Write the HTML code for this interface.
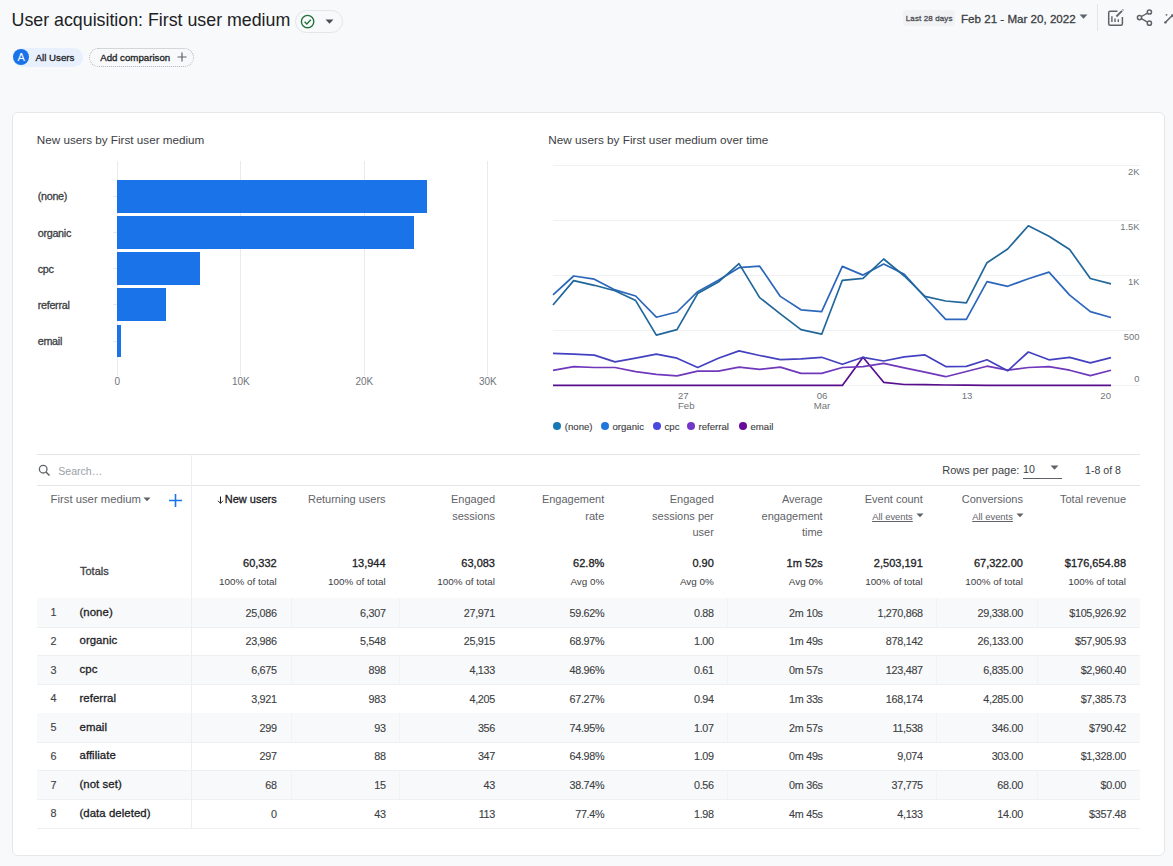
<!DOCTYPE html>
<html><head><meta charset="utf-8"><style>
html,body{margin:0;padding:0;}
body{width:1173px;height:866px;overflow:hidden;background:#f8f9fa;position:relative;font-family:"Liberation Sans", sans-serif;}
.t{position:absolute;white-space:nowrap;}
.r{position:absolute;}
</style></head><body>
<div class="t" style="left:11.60px;top:11.52px;font-size:17.8px;line-height:17.8px;color:#202124;font-weight:400;">User acquisition: First user medium</div><div class="r" style="left:295.00px;top:9.50px;width:47.50px;height:23.00px;border:1px solid #e3e5e8;border-radius:12px;box-sizing:border-box;background:#f8f9fa"></div><svg class="r" style="left:300px;top:14px" width="16" height="16" viewBox="0 0 16 16"><circle cx="7.6" cy="7.6" r="6.2" fill="none" stroke="#23723f" stroke-width="1.4"/><path d="M4.6 7.8 L6.8 10 L10.8 5.8" fill="none" stroke="#23723f" stroke-width="1.4"/></svg><svg class="r" style="left:324.5px;top:18.5px" width="9" height="6" viewBox="0 0 9 6"><path d="M0.5 0.5 L8.5 0.5 L4.5 4.8Z" fill="#4a4e52"/></svg><div class="r" style="left:13.00px;top:48.00px;width:70.00px;height:18.50px;background:#e8f0fe;border-radius:9.5px"></div><div class="r" style="left:13.30px;top:49.20px;width:15.80px;height:15.80px;background:#1a73e8;border-radius:50%"></div><div class="t" style="left:-178.80px;width:400px;text-align:center;top:52.26px;font-size:11px;line-height:11px;color:#fff;font-weight:400;">A</div><div class="t" style="left:35.60px;top:52.94px;font-size:9.7px;line-height:9.7px;color:#202124;font-weight:400;-webkit-text-stroke:0.3px #202124;">All Users</div><div class="r" style="left:89.40px;top:48.10px;width:104.40px;height:19.10px;border:1px dotted #b0b4b9;border-radius:10px;box-sizing:border-box"></div><div class="t" style="left:100.20px;top:52.84px;font-size:9.7px;line-height:9.7px;color:#202124;font-weight:400;-webkit-text-stroke:0.3px #202124;">Add comparison</div><svg class="r" style="left:177px;top:52px" width="10" height="10" viewBox="0 0 10 10"><path d="M5 0.5V9.5M0.5 5H9.5" stroke="#5f6368" stroke-width="1.2"/></svg><div class="r" style="left:903.00px;top:10.00px;width:52.00px;height:16.00px;background:#f1f2f4;border-radius:3px"></div><div class="t" style="left:905.80px;top:14.76px;font-size:8px;line-height:8px;color:#4d5156;font-weight:400;-webkit-text-stroke:0.3px #4d5156;letter-spacing:0.12px;">Last 28 days</div><div class="t" style="left:961.00px;top:12.57px;font-size:11.6px;line-height:11.6px;color:#3c4043;font-weight:400;-webkit-text-stroke:0.3px #3c4043;">Feb 21 - Mar 20, 2022</div><svg class="r" style="left:1079px;top:14px" width="9" height="6" viewBox="0 0 9 6"><path d="M0.5 0.5 L8.5 0.5 L4.5 4.8Z" fill="#5f6368"/></svg><div class="r" style="left:1097.00px;top:4.00px;width:1.00px;height:27.00px;background:#e3e5e8"></div><svg class="r" style="left:0;top:0" width="1173" height="40" viewBox="0 0 1173 40"><path d="M1117.5 11.3H1110.2Q1108.7 11.3 1108.7 12.8V23.7Q1108.7 25.2 1110.2 25.2H1120.9Q1122.4 25.2 1122.4 23.7V17" fill="none" stroke="#5f6368" stroke-width="1.5"/><path d="M1111.9 16.3V21.9M1115 18.5V21.9M1118.3 19.2V21.9" stroke="#5f6368" stroke-width="1.4"/><path d="M1116.4 16.5L1122 10.9" stroke="#5f6368" stroke-width="1.8"/><path d="M1122.6 10.3L1123.4 9.6" stroke="#5f6368" stroke-width="1.4"/><circle cx="1149.4" cy="12" r="2.1" fill="none" stroke="#5f6368" stroke-width="1.5"/><circle cx="1139.5" cy="17.6" r="2.1" fill="none" stroke="#5f6368" stroke-width="1.5"/><circle cx="1149.4" cy="23.2" r="2.1" fill="none" stroke="#5f6368" stroke-width="1.5"/><path d="M1141.4 16.5L1147.5 13.1M1141.4 18.7L1147.5 22.1" stroke="#5f6368" stroke-width="1.4"/><path d="M1165.3 22.5L1171 16.8L1173 15" stroke="#5f6368" stroke-width="1.6" fill="none"/><circle cx="1165.4" cy="22.4" r="1.2" fill="#5f6368"/><circle cx="1166.5" cy="14.8" r="0.9" fill="#5f6368"/><circle cx="1172.3" cy="15.6" r="1.3" fill="#5f6368"/></svg><div class="r" style="left:12.00px;top:112.00px;width:1152.50px;height:743.50px;background:#fff;border:1px solid #e5e7ea;border-radius:6px;box-sizing:border-box"></div><div class="t" style="left:36.80px;top:134.38px;font-size:11.7px;line-height:11.7px;color:#3c4043;font-weight:400;">New users by First user medium</div><div class="r" style="left:116.80px;top:161.00px;width:1.00px;height:214.60px;background:#e8eaed"></div><div class="r" style="left:240.30px;top:161.00px;width:1.00px;height:214.60px;background:#e8eaed"></div><div class="r" style="left:363.80px;top:161.00px;width:1.00px;height:214.60px;background:#e8eaed"></div><div class="r" style="left:487.30px;top:161.00px;width:1.00px;height:214.60px;background:#e8eaed"></div><div class="t" style="left:-82.70px;width:400px;text-align:center;top:376.89px;font-size:10px;line-height:10px;color:#70757a;font-weight:400;">0</div><div class="t" style="left:40.80px;width:400px;text-align:center;top:376.89px;font-size:10px;line-height:10px;color:#70757a;font-weight:400;">10K</div><div class="t" style="left:164.30px;width:400px;text-align:center;top:376.89px;font-size:10px;line-height:10px;color:#70757a;font-weight:400;">20K</div><div class="t" style="left:287.80px;width:400px;text-align:center;top:376.89px;font-size:10px;line-height:10px;color:#70757a;font-weight:400;">30K</div><div class="r" style="left:117.30px;top:180.10px;width:309.81px;height:32.50px;background:#1a73e8"></div><div class="t" style="left:37.70px;top:191.43px;font-size:10.8px;line-height:10.8px;color:#3c4043;font-weight:400;-webkit-text-stroke:0.3px #3c4043;letter-spacing:-0.3px;">(none)</div><div class="r" style="left:112.50px;top:196.10px;width:4.00px;height:1.00px;background:#e8eaed"></div><div class="r" style="left:117.30px;top:216.20px;width:296.23px;height:32.50px;background:#1a73e8"></div><div class="t" style="left:37.70px;top:227.53px;font-size:10.8px;line-height:10.8px;color:#3c4043;font-weight:400;-webkit-text-stroke:0.3px #3c4043;letter-spacing:-0.3px;">organic</div><div class="r" style="left:112.50px;top:232.20px;width:4.00px;height:1.00px;background:#e8eaed"></div><div class="r" style="left:117.30px;top:252.30px;width:82.44px;height:32.50px;background:#1a73e8"></div><div class="t" style="left:37.70px;top:263.63px;font-size:10.8px;line-height:10.8px;color:#3c4043;font-weight:400;-webkit-text-stroke:0.3px #3c4043;letter-spacing:-0.3px;">cpc</div><div class="r" style="left:112.50px;top:268.30px;width:4.00px;height:1.00px;background:#e8eaed"></div><div class="r" style="left:117.30px;top:288.40px;width:48.42px;height:32.50px;background:#1a73e8"></div><div class="t" style="left:37.70px;top:299.73px;font-size:10.8px;line-height:10.8px;color:#3c4043;font-weight:400;-webkit-text-stroke:0.3px #3c4043;letter-spacing:-0.3px;">referral</div><div class="r" style="left:112.50px;top:304.40px;width:4.00px;height:1.00px;background:#e8eaed"></div><div class="r" style="left:117.30px;top:324.50px;width:3.69px;height:32.50px;background:#1a73e8"></div><div class="t" style="left:37.70px;top:335.83px;font-size:10.8px;line-height:10.8px;color:#3c4043;font-weight:400;-webkit-text-stroke:0.3px #3c4043;letter-spacing:-0.3px;">email</div><div class="r" style="left:112.50px;top:340.50px;width:4.00px;height:1.00px;background:#e8eaed"></div><div class="t" style="left:548.30px;top:134.34px;font-size:11.75px;line-height:11.75px;color:#3c4043;font-weight:400;">New users by First user medium over time</div><div class="r" style="left:553.00px;top:385.10px;width:587.00px;height:1.00px;background:#f0f1f3"></div><div class="r" style="left:553.00px;top:329.90px;width:587.00px;height:1.00px;background:#f0f1f3"></div><div class="r" style="left:553.00px;top:274.80px;width:587.00px;height:1.00px;background:#f0f1f3"></div><div class="r" style="left:553.00px;top:219.70px;width:587.00px;height:1.00px;background:#f0f1f3"></div><div class="r" style="left:553.00px;top:164.60px;width:587.00px;height:1.00px;background:#f0f1f3"></div><div class="t" style="left:739.50px;width:400px;text-align:right;top:332.39px;font-size:9.4px;line-height:9.4px;color:#70757a;font-weight:400;">500</div><div class="t" style="left:739.50px;width:400px;text-align:right;top:277.29px;font-size:9.4px;line-height:9.4px;color:#70757a;font-weight:400;">1K</div><div class="t" style="left:739.50px;width:400px;text-align:right;top:222.19px;font-size:9.4px;line-height:9.4px;color:#70757a;font-weight:400;">1.5K</div><div class="t" style="left:739.50px;width:400px;text-align:right;top:167.09px;font-size:9.4px;line-height:9.4px;color:#70757a;font-weight:400;">2K</div><div class="t" style="left:739.50px;width:400px;text-align:right;top:374.19px;font-size:9.4px;line-height:9.4px;color:#70757a;font-weight:400;">0</div><div class="t" style="left:678.00px;top:391.43px;font-size:9.6px;line-height:9.6px;color:#70757a;font-weight:400;">27</div><div class="t" style="left:678.00px;top:400.93px;font-size:9.6px;line-height:9.6px;color:#70757a;font-weight:400;">Feb</div><div class="t" style="left:622.00px;width:400px;text-align:center;top:391.43px;font-size:9.6px;line-height:9.6px;color:#70757a;font-weight:400;">06</div><div class="t" style="left:622.00px;width:400px;text-align:center;top:400.93px;font-size:9.6px;line-height:9.6px;color:#70757a;font-weight:400;">Mar</div><div class="t" style="left:767.00px;width:400px;text-align:center;top:391.43px;font-size:9.6px;line-height:9.6px;color:#70757a;font-weight:400;">13</div><div class="t" style="left:711.00px;width:400px;text-align:right;top:391.43px;font-size:9.6px;line-height:9.6px;color:#70757a;font-weight:400;">20</div><svg class="r" style="left:0;top:0" width="1173" height="866" viewBox="0 0 1173 866"><polyline points="553.00,385.40 573.67,385.40 594.33,385.40 615.00,385.40 635.67,385.40 656.33,385.40 677.00,385.40 697.67,385.40 718.33,385.40 739.00,385.40 759.67,385.40 780.33,385.40 801.00,385.40 821.67,385.40 842.33,385.40 863.00,357.30 883.67,382.30 904.33,384.50 925.00,384.70 945.67,385.00 966.33,385.20 987.00,385.40 1007.67,385.40 1028.33,385.40 1049.00,385.40 1069.67,385.40 1090.33,385.40 1111.00,385.40" fill="none" stroke="#580d8c" stroke-width="1.7" stroke-linejoin="round"/><polyline points="553.00,370.30 573.67,366.70 594.33,367.50 615.00,367.50 635.67,371.70 656.33,374.30 677.00,375.80 697.67,371.20 718.33,371.20 739.00,367.10 759.67,369.30 780.33,367.10 801.00,373.40 821.67,373.40 842.33,367.50 863.00,366.60 883.67,363.40 904.33,367.90 925.00,372.10 945.67,376.70 966.33,371.50 987.00,366.20 1007.67,370.20 1028.33,367.50 1049.00,366.60 1069.67,370.20 1090.33,375.60 1111.00,370.20" fill="none" stroke="#7038bb" stroke-width="1.7" stroke-linejoin="round"/><polyline points="553.00,353.30 573.67,354.20 594.33,355.10 615.00,361.90 635.67,358.20 656.33,354.20 677.00,358.20 697.67,367.50 718.33,358.20 739.00,350.90 759.67,355.50 780.33,359.70 801.00,358.80 821.67,357.30 842.33,364.30 863.00,357.30 883.67,361.00 904.33,356.80 925.00,354.90 945.67,366.60 966.33,366.40 987.00,359.80 1007.67,370.80 1028.33,352.00 1049.00,359.80 1069.67,357.40 1090.33,362.90 1111.00,357.60" fill="none" stroke="#4441c0" stroke-width="1.7" stroke-linejoin="round"/><polyline points="553.00,294.90 573.67,276.00 594.33,279.20 615.00,289.90 635.67,296.00 656.33,317.20 677.00,312.00 697.67,291.70 718.33,280.30 739.00,267.70 759.67,266.20 780.33,296.40 801.00,309.80 821.67,311.70 842.33,266.40 863.00,275.10 883.67,264.00 904.33,274.20 925.00,297.30 945.67,319.40 966.33,319.40 987.00,281.70 1007.67,286.30 1028.33,278.70 1049.00,272.10 1069.67,295.10 1090.33,311.60 1111.00,317.50" fill="none" stroke="#2c67bb" stroke-width="1.7" stroke-linejoin="round"/><polyline points="553.00,305.00 573.67,280.60 594.33,285.30 615.00,290.80 635.67,300.60 656.33,335.10 677.00,329.60 697.67,293.60 718.33,282.10 739.00,263.60 759.67,297.60 780.33,313.90 801.00,329.60 821.67,334.20 842.33,280.30 863.00,278.40 883.67,259.00 904.33,276.00 925.00,296.40 945.67,301.00 966.33,302.80 987.00,262.70 1007.67,249.00 1028.33,225.80 1049.00,236.30 1069.67,249.50 1090.33,278.50 1111.00,283.90" fill="none" stroke="#21679a" stroke-width="1.7" stroke-linejoin="round"/></svg><div class="r" style="left:553.30px;top:422.30px;width:8.00px;height:8.00px;background:#1778b4;border-radius:50%"></div><div class="t" style="left:564.80px;top:422.03px;font-size:9.6px;line-height:9.6px;color:#3c4043;font-weight:400;-webkit-text-stroke:0.12px #3c4043;">(none)</div><div class="r" style="left:601.00px;top:422.30px;width:8.00px;height:8.00px;background:#2176dd;border-radius:50%"></div><div class="t" style="left:612.50px;top:422.03px;font-size:9.6px;line-height:9.6px;color:#3c4043;font-weight:400;-webkit-text-stroke:0.12px #3c4043;">organic</div><div class="r" style="left:653.00px;top:422.30px;width:8.00px;height:8.00px;background:#4848e0;border-radius:50%"></div><div class="t" style="left:664.50px;top:422.03px;font-size:9.6px;line-height:9.6px;color:#3c4043;font-weight:400;-webkit-text-stroke:0.12px #3c4043;">cpc</div><div class="r" style="left:687.00px;top:422.30px;width:8.00px;height:8.00px;background:#7236c8;border-radius:50%"></div><div class="t" style="left:698.50px;top:422.03px;font-size:9.6px;line-height:9.6px;color:#3c4043;font-weight:400;-webkit-text-stroke:0.12px #3c4043;">referral</div><div class="r" style="left:739.00px;top:422.30px;width:8.00px;height:8.00px;background:#6a0a9a;border-radius:50%"></div><div class="t" style="left:750.50px;top:422.03px;font-size:9.6px;line-height:9.6px;color:#3c4043;font-weight:400;-webkit-text-stroke:0.12px #3c4043;">email</div><div class="r" style="left:37.00px;top:453.50px;width:1103.00px;height:1.00px;background:#e3e5e8"></div><div class="r" style="left:37.00px;top:485.00px;width:1103.00px;height:1.00px;background:#e3e5e8"></div><svg class="r" style="left:38px;top:464px" width="13" height="13" viewBox="0 0 13 13"><circle cx="5.2" cy="5.2" r="3.8" fill="none" stroke="#5f6368" stroke-width="1.3"/><path d="M8 8L11.5 11.5" stroke="#5f6368" stroke-width="1.5"/></svg><div class="t" style="left:58.20px;top:465.90px;font-size:10.6px;line-height:10.6px;color:#9aa0a6;font-weight:400;">Search…</div><div class="t" style="left:942.30px;top:464.96px;font-size:11.0px;line-height:11.0px;color:#3c4043;font-weight:400;">Rows per page:</div><div class="t" style="left:1023.00px;top:463.60px;font-size:10.6px;line-height:10.6px;color:#3c4043;font-weight:400;">10</div><div class="r" style="left:1022.50px;top:478.00px;width:39.50px;height:1.00px;background:#5f6368"></div><svg class="r" style="left:1050px;top:464.5px" width="9" height="6" viewBox="0 0 9 6"><path d="M0.5 0.5 L8.5 0.5 L4.5 4.8Z" fill="#5f6368"/></svg><div class="t" style="left:1085.00px;top:465.30px;font-size:10.6px;line-height:10.6px;color:#3c4043;font-weight:400;">1-8 of 8</div><div class="t" style="left:50.60px;top:494.02px;font-size:11.3px;line-height:11.3px;color:#5f6368;font-weight:400;">First user medium</div><svg class="r" style="left:143px;top:497px" width="8" height="5" viewBox="0 0 8 5"><path d="M0.5 0.5 L7.5 0.5 L4 4.3Z" fill="#5f6368"/></svg><svg class="r" style="left:168px;top:493px" width="15" height="15" viewBox="0 0 15 15"><path d="M7.5 1V14M1 7.5H14" stroke="#1a73e8" stroke-width="1.6"/></svg><div class="t" style="left:-123.30px;width:400px;text-align:right;top:494.46px;font-size:11px;line-height:11px;color:#202124;font-weight:400;-webkit-text-stroke:0.3px #202124;">New users</div><svg class="r" style="left:216.8px;top:495.5px" width="7" height="8" viewBox="0 0 7 8"><path d="M3.5 0.5V7.3M1 4.8L3.5 7.3L6 4.8" fill="none" stroke="#202124" stroke-width="1"/></svg><div class="t" style="left:-14.40px;width:400px;text-align:right;top:494.26px;font-size:11px;line-height:11px;color:#5f6368;font-weight:400;">Returning users</div><div class="t" style="left:95.00px;width:400px;text-align:right;top:494.26px;font-size:11px;line-height:11px;color:#5f6368;font-weight:400;">Engaged</div><div class="t" style="left:95.00px;width:400px;text-align:right;top:510.66px;font-size:11px;line-height:11px;color:#5f6368;font-weight:400;">sessions</div><div class="t" style="left:204.30px;width:400px;text-align:right;top:494.26px;font-size:11px;line-height:11px;color:#5f6368;font-weight:400;">Engagement</div><div class="t" style="left:204.30px;width:400px;text-align:right;top:510.66px;font-size:11px;line-height:11px;color:#5f6368;font-weight:400;">rate</div><div class="t" style="left:313.80px;width:400px;text-align:right;top:494.26px;font-size:11px;line-height:11px;color:#5f6368;font-weight:400;">Engaged</div><div class="t" style="left:313.80px;width:400px;text-align:right;top:510.66px;font-size:11px;line-height:11px;color:#5f6368;font-weight:400;">sessions per</div><div class="t" style="left:313.80px;width:400px;text-align:right;top:527.06px;font-size:11px;line-height:11px;color:#5f6368;font-weight:400;">user</div><div class="t" style="left:422.70px;width:400px;text-align:right;top:494.26px;font-size:11px;line-height:11px;color:#5f6368;font-weight:400;">Average</div><div class="t" style="left:422.70px;width:400px;text-align:right;top:510.66px;font-size:11px;line-height:11px;color:#5f6368;font-weight:400;">engagement</div><div class="t" style="left:422.70px;width:400px;text-align:right;top:527.06px;font-size:11px;line-height:11px;color:#5f6368;font-weight:400;">time</div><div class="t" style="left:522.80px;width:400px;text-align:right;top:494.26px;font-size:11px;line-height:11px;color:#5f6368;font-weight:400;">Event count</div><div class="t" style="left:622.90px;width:400px;text-align:right;top:494.26px;font-size:11px;line-height:11px;color:#5f6368;font-weight:400;">Conversions</div><div class="t" style="left:726.00px;width:400px;text-align:right;top:494.26px;font-size:11px;line-height:11px;color:#5f6368;font-weight:400;">Total revenue</div><div class="t" style="left:512.80px;width:400px;text-align:right;top:511.99px;font-size:9.4px;line-height:9.4px;color:#5f6368;font-weight:400;text-decoration:underline;">All events</div><svg class="r" style="left:916.3px;top:513px" width="8" height="5" viewBox="0 0 8 5"><path d="M0.5 0.5 L7.5 0.5 L4 4.3Z" fill="#5f6368"/></svg><div class="t" style="left:612.90px;width:400px;text-align:right;top:511.99px;font-size:9.4px;line-height:9.4px;color:#5f6368;font-weight:400;text-decoration:underline;">All events</div><svg class="r" style="left:1016.4px;top:513px" width="8" height="5" viewBox="0 0 8 5"><path d="M0.5 0.5 L7.5 0.5 L4 4.3Z" fill="#5f6368"/></svg><div class="t" style="left:80.00px;top:566.46px;font-size:11px;line-height:11px;color:#3c4043;font-weight:400;-webkit-text-stroke:0.3px #3c4043;">Totals</div><div class="t" style="left:-123.30px;width:400px;text-align:right;top:558.06px;font-size:11px;line-height:11px;color:#202124;font-weight:400;-webkit-text-stroke:0.3px #202124;">60,332</div><div class="t" style="left:-123.30px;width:400px;text-align:right;top:576.58px;font-size:9.9px;line-height:9.9px;color:#3c4043;font-weight:400;">100% of total</div><div class="t" style="left:-14.40px;width:400px;text-align:right;top:558.06px;font-size:11px;line-height:11px;color:#202124;font-weight:400;-webkit-text-stroke:0.3px #202124;">13,944</div><div class="t" style="left:-14.40px;width:400px;text-align:right;top:576.58px;font-size:9.9px;line-height:9.9px;color:#3c4043;font-weight:400;">100% of total</div><div class="t" style="left:95.00px;width:400px;text-align:right;top:558.06px;font-size:11px;line-height:11px;color:#202124;font-weight:400;-webkit-text-stroke:0.3px #202124;">63,083</div><div class="t" style="left:95.00px;width:400px;text-align:right;top:576.58px;font-size:9.9px;line-height:9.9px;color:#3c4043;font-weight:400;">100% of total</div><div class="t" style="left:204.30px;width:400px;text-align:right;top:558.06px;font-size:11px;line-height:11px;color:#202124;font-weight:400;-webkit-text-stroke:0.3px #202124;">62.8%</div><div class="t" style="left:204.30px;width:400px;text-align:right;top:576.58px;font-size:9.9px;line-height:9.9px;color:#3c4043;font-weight:400;">Avg 0%</div><div class="t" style="left:313.80px;width:400px;text-align:right;top:558.06px;font-size:11px;line-height:11px;color:#202124;font-weight:400;-webkit-text-stroke:0.3px #202124;">0.90</div><div class="t" style="left:313.80px;width:400px;text-align:right;top:576.58px;font-size:9.9px;line-height:9.9px;color:#3c4043;font-weight:400;">Avg 0%</div><div class="t" style="left:422.70px;width:400px;text-align:right;top:558.06px;font-size:11px;line-height:11px;color:#202124;font-weight:400;-webkit-text-stroke:0.3px #202124;">1m 52s</div><div class="t" style="left:422.70px;width:400px;text-align:right;top:576.58px;font-size:9.9px;line-height:9.9px;color:#3c4043;font-weight:400;">Avg 0%</div><div class="t" style="left:522.80px;width:400px;text-align:right;top:558.06px;font-size:11px;line-height:11px;color:#202124;font-weight:400;-webkit-text-stroke:0.3px #202124;">2,503,191</div><div class="t" style="left:522.80px;width:400px;text-align:right;top:576.58px;font-size:9.9px;line-height:9.9px;color:#3c4043;font-weight:400;">100% of total</div><div class="t" style="left:622.90px;width:400px;text-align:right;top:558.06px;font-size:11px;line-height:11px;color:#202124;font-weight:400;-webkit-text-stroke:0.3px #202124;">67,322.00</div><div class="t" style="left:622.90px;width:400px;text-align:right;top:576.58px;font-size:9.9px;line-height:9.9px;color:#3c4043;font-weight:400;">100% of total</div><div class="t" style="left:726.00px;width:400px;text-align:right;top:558.06px;font-size:11px;line-height:11px;color:#202124;font-weight:400;-webkit-text-stroke:0.3px #202124;">$176,654.88</div><div class="t" style="left:726.00px;width:400px;text-align:right;top:576.58px;font-size:9.9px;line-height:9.9px;color:#3c4043;font-weight:400;">100% of total</div><div class="r" style="left:37.00px;top:597.80px;width:1103.00px;height:1.00px;background:#e8eaed"></div><div class="r" style="left:37.00px;top:598.30px;width:1103.00px;height:28.75px;background:#f8f9fa"></div><div class="r" style="left:290.50px;top:598.30px;width:1.00px;height:28.75px;background:#f1f3f4"></div><div class="r" style="left:399.00px;top:598.30px;width:1.00px;height:28.75px;background:#f1f3f4"></div><div class="r" style="left:727.00px;top:598.30px;width:1.00px;height:28.75px;background:#f1f3f4"></div><div class="r" style="left:936.40px;top:598.30px;width:1.00px;height:28.75px;background:#f1f3f4"></div><div class="r" style="left:1036.50px;top:598.30px;width:1.00px;height:28.75px;background:#f1f3f4"></div><div class="r" style="left:37.00px;top:626.55px;width:1103.00px;height:1.00px;background:#eef0f2"></div><div class="t" style="left:50.50px;top:607.13px;font-size:10.8px;line-height:10.8px;color:#3c4043;font-weight:400;-webkit-text-stroke:0.12px #3c4043;">1</div><div class="t" style="left:79.50px;top:606.53px;font-size:11.4px;line-height:11.4px;color:#202124;font-weight:400;-webkit-text-stroke:0.3px #202124;letter-spacing:0.05px;">(none)</div><div class="t" style="left:-123.30px;width:400px;text-align:right;top:607.73px;font-size:10.8px;line-height:10.8px;color:#3c4043;font-weight:400;-webkit-text-stroke:0.12px #3c4043;letter-spacing:-0.3px;">25,086</div><div class="t" style="left:-14.40px;width:400px;text-align:right;top:607.73px;font-size:10.8px;line-height:10.8px;color:#3c4043;font-weight:400;-webkit-text-stroke:0.12px #3c4043;letter-spacing:-0.3px;">6,307</div><div class="t" style="left:95.00px;width:400px;text-align:right;top:607.73px;font-size:10.8px;line-height:10.8px;color:#3c4043;font-weight:400;-webkit-text-stroke:0.12px #3c4043;letter-spacing:-0.3px;">27,971</div><div class="t" style="left:204.30px;width:400px;text-align:right;top:607.73px;font-size:10.8px;line-height:10.8px;color:#3c4043;font-weight:400;-webkit-text-stroke:0.12px #3c4043;letter-spacing:-0.3px;">59.62%</div><div class="t" style="left:313.80px;width:400px;text-align:right;top:607.73px;font-size:10.8px;line-height:10.8px;color:#3c4043;font-weight:400;-webkit-text-stroke:0.12px #3c4043;letter-spacing:-0.3px;">0.88</div><div class="t" style="left:422.70px;width:400px;text-align:right;top:607.73px;font-size:10.8px;line-height:10.8px;color:#3c4043;font-weight:400;-webkit-text-stroke:0.12px #3c4043;letter-spacing:-0.3px;">2m 10s</div><div class="t" style="left:522.80px;width:400px;text-align:right;top:607.73px;font-size:10.8px;line-height:10.8px;color:#3c4043;font-weight:400;-webkit-text-stroke:0.12px #3c4043;letter-spacing:-0.3px;">1,270,868</div><div class="t" style="left:622.90px;width:400px;text-align:right;top:607.73px;font-size:10.8px;line-height:10.8px;color:#3c4043;font-weight:400;-webkit-text-stroke:0.12px #3c4043;letter-spacing:-0.3px;">29,338.00</div><div class="t" style="left:726.00px;width:400px;text-align:right;top:607.73px;font-size:10.8px;line-height:10.8px;color:#3c4043;font-weight:400;-webkit-text-stroke:0.12px #3c4043;letter-spacing:-0.3px;">$105,926.92</div><div class="r" style="left:37.00px;top:655.30px;width:1103.00px;height:1.00px;background:#eef0f2"></div><div class="t" style="left:50.50px;top:635.88px;font-size:10.8px;line-height:10.8px;color:#3c4043;font-weight:400;-webkit-text-stroke:0.12px #3c4043;">2</div><div class="t" style="left:79.50px;top:635.28px;font-size:11.4px;line-height:11.4px;color:#202124;font-weight:400;-webkit-text-stroke:0.3px #202124;letter-spacing:0.05px;">organic</div><div class="t" style="left:-123.30px;width:400px;text-align:right;top:636.48px;font-size:10.8px;line-height:10.8px;color:#3c4043;font-weight:400;-webkit-text-stroke:0.12px #3c4043;letter-spacing:-0.3px;">23,986</div><div class="t" style="left:-14.40px;width:400px;text-align:right;top:636.48px;font-size:10.8px;line-height:10.8px;color:#3c4043;font-weight:400;-webkit-text-stroke:0.12px #3c4043;letter-spacing:-0.3px;">5,548</div><div class="t" style="left:95.00px;width:400px;text-align:right;top:636.48px;font-size:10.8px;line-height:10.8px;color:#3c4043;font-weight:400;-webkit-text-stroke:0.12px #3c4043;letter-spacing:-0.3px;">25,915</div><div class="t" style="left:204.30px;width:400px;text-align:right;top:636.48px;font-size:10.8px;line-height:10.8px;color:#3c4043;font-weight:400;-webkit-text-stroke:0.12px #3c4043;letter-spacing:-0.3px;">68.97%</div><div class="t" style="left:313.80px;width:400px;text-align:right;top:636.48px;font-size:10.8px;line-height:10.8px;color:#3c4043;font-weight:400;-webkit-text-stroke:0.12px #3c4043;letter-spacing:-0.3px;">1.00</div><div class="t" style="left:422.70px;width:400px;text-align:right;top:636.48px;font-size:10.8px;line-height:10.8px;color:#3c4043;font-weight:400;-webkit-text-stroke:0.12px #3c4043;letter-spacing:-0.3px;">1m 49s</div><div class="t" style="left:522.80px;width:400px;text-align:right;top:636.48px;font-size:10.8px;line-height:10.8px;color:#3c4043;font-weight:400;-webkit-text-stroke:0.12px #3c4043;letter-spacing:-0.3px;">878,142</div><div class="t" style="left:622.90px;width:400px;text-align:right;top:636.48px;font-size:10.8px;line-height:10.8px;color:#3c4043;font-weight:400;-webkit-text-stroke:0.12px #3c4043;letter-spacing:-0.3px;">26,133.00</div><div class="t" style="left:726.00px;width:400px;text-align:right;top:636.48px;font-size:10.8px;line-height:10.8px;color:#3c4043;font-weight:400;-webkit-text-stroke:0.12px #3c4043;letter-spacing:-0.3px;">$57,905.93</div><div class="r" style="left:37.00px;top:655.80px;width:1103.00px;height:28.75px;background:#f8f9fa"></div><div class="r" style="left:290.50px;top:655.80px;width:1.00px;height:28.75px;background:#f1f3f4"></div><div class="r" style="left:399.00px;top:655.80px;width:1.00px;height:28.75px;background:#f1f3f4"></div><div class="r" style="left:727.00px;top:655.80px;width:1.00px;height:28.75px;background:#f1f3f4"></div><div class="r" style="left:936.40px;top:655.80px;width:1.00px;height:28.75px;background:#f1f3f4"></div><div class="r" style="left:1036.50px;top:655.80px;width:1.00px;height:28.75px;background:#f1f3f4"></div><div class="r" style="left:37.00px;top:684.05px;width:1103.00px;height:1.00px;background:#eef0f2"></div><div class="t" style="left:50.50px;top:664.63px;font-size:10.8px;line-height:10.8px;color:#3c4043;font-weight:400;-webkit-text-stroke:0.12px #3c4043;">3</div><div class="t" style="left:79.50px;top:664.03px;font-size:11.4px;line-height:11.4px;color:#202124;font-weight:400;-webkit-text-stroke:0.3px #202124;letter-spacing:0.05px;">cpc</div><div class="t" style="left:-123.30px;width:400px;text-align:right;top:665.23px;font-size:10.8px;line-height:10.8px;color:#3c4043;font-weight:400;-webkit-text-stroke:0.12px #3c4043;letter-spacing:-0.3px;">6,675</div><div class="t" style="left:-14.40px;width:400px;text-align:right;top:665.23px;font-size:10.8px;line-height:10.8px;color:#3c4043;font-weight:400;-webkit-text-stroke:0.12px #3c4043;letter-spacing:-0.3px;">898</div><div class="t" style="left:95.00px;width:400px;text-align:right;top:665.23px;font-size:10.8px;line-height:10.8px;color:#3c4043;font-weight:400;-webkit-text-stroke:0.12px #3c4043;letter-spacing:-0.3px;">4,133</div><div class="t" style="left:204.30px;width:400px;text-align:right;top:665.23px;font-size:10.8px;line-height:10.8px;color:#3c4043;font-weight:400;-webkit-text-stroke:0.12px #3c4043;letter-spacing:-0.3px;">48.96%</div><div class="t" style="left:313.80px;width:400px;text-align:right;top:665.23px;font-size:10.8px;line-height:10.8px;color:#3c4043;font-weight:400;-webkit-text-stroke:0.12px #3c4043;letter-spacing:-0.3px;">0.61</div><div class="t" style="left:422.70px;width:400px;text-align:right;top:665.23px;font-size:10.8px;line-height:10.8px;color:#3c4043;font-weight:400;-webkit-text-stroke:0.12px #3c4043;letter-spacing:-0.3px;">0m 57s</div><div class="t" style="left:522.80px;width:400px;text-align:right;top:665.23px;font-size:10.8px;line-height:10.8px;color:#3c4043;font-weight:400;-webkit-text-stroke:0.12px #3c4043;letter-spacing:-0.3px;">123,487</div><div class="t" style="left:622.90px;width:400px;text-align:right;top:665.23px;font-size:10.8px;line-height:10.8px;color:#3c4043;font-weight:400;-webkit-text-stroke:0.12px #3c4043;letter-spacing:-0.3px;">6,835.00</div><div class="t" style="left:726.00px;width:400px;text-align:right;top:665.23px;font-size:10.8px;line-height:10.8px;color:#3c4043;font-weight:400;-webkit-text-stroke:0.12px #3c4043;letter-spacing:-0.3px;">$2,960.40</div><div class="r" style="left:37.00px;top:712.80px;width:1103.00px;height:1.00px;background:#eef0f2"></div><div class="t" style="left:50.50px;top:693.38px;font-size:10.8px;line-height:10.8px;color:#3c4043;font-weight:400;-webkit-text-stroke:0.12px #3c4043;">4</div><div class="t" style="left:79.50px;top:692.78px;font-size:11.4px;line-height:11.4px;color:#202124;font-weight:400;-webkit-text-stroke:0.3px #202124;letter-spacing:0.05px;">referral</div><div class="t" style="left:-123.30px;width:400px;text-align:right;top:693.98px;font-size:10.8px;line-height:10.8px;color:#3c4043;font-weight:400;-webkit-text-stroke:0.12px #3c4043;letter-spacing:-0.3px;">3,921</div><div class="t" style="left:-14.40px;width:400px;text-align:right;top:693.98px;font-size:10.8px;line-height:10.8px;color:#3c4043;font-weight:400;-webkit-text-stroke:0.12px #3c4043;letter-spacing:-0.3px;">983</div><div class="t" style="left:95.00px;width:400px;text-align:right;top:693.98px;font-size:10.8px;line-height:10.8px;color:#3c4043;font-weight:400;-webkit-text-stroke:0.12px #3c4043;letter-spacing:-0.3px;">4,205</div><div class="t" style="left:204.30px;width:400px;text-align:right;top:693.98px;font-size:10.8px;line-height:10.8px;color:#3c4043;font-weight:400;-webkit-text-stroke:0.12px #3c4043;letter-spacing:-0.3px;">67.27%</div><div class="t" style="left:313.80px;width:400px;text-align:right;top:693.98px;font-size:10.8px;line-height:10.8px;color:#3c4043;font-weight:400;-webkit-text-stroke:0.12px #3c4043;letter-spacing:-0.3px;">0.94</div><div class="t" style="left:422.70px;width:400px;text-align:right;top:693.98px;font-size:10.8px;line-height:10.8px;color:#3c4043;font-weight:400;-webkit-text-stroke:0.12px #3c4043;letter-spacing:-0.3px;">1m 33s</div><div class="t" style="left:522.80px;width:400px;text-align:right;top:693.98px;font-size:10.8px;line-height:10.8px;color:#3c4043;font-weight:400;-webkit-text-stroke:0.12px #3c4043;letter-spacing:-0.3px;">168,174</div><div class="t" style="left:622.90px;width:400px;text-align:right;top:693.98px;font-size:10.8px;line-height:10.8px;color:#3c4043;font-weight:400;-webkit-text-stroke:0.12px #3c4043;letter-spacing:-0.3px;">4,285.00</div><div class="t" style="left:726.00px;width:400px;text-align:right;top:693.98px;font-size:10.8px;line-height:10.8px;color:#3c4043;font-weight:400;-webkit-text-stroke:0.12px #3c4043;letter-spacing:-0.3px;">$7,385.73</div><div class="r" style="left:37.00px;top:713.30px;width:1103.00px;height:28.75px;background:#f8f9fa"></div><div class="r" style="left:290.50px;top:713.30px;width:1.00px;height:28.75px;background:#f1f3f4"></div><div class="r" style="left:399.00px;top:713.30px;width:1.00px;height:28.75px;background:#f1f3f4"></div><div class="r" style="left:727.00px;top:713.30px;width:1.00px;height:28.75px;background:#f1f3f4"></div><div class="r" style="left:936.40px;top:713.30px;width:1.00px;height:28.75px;background:#f1f3f4"></div><div class="r" style="left:1036.50px;top:713.30px;width:1.00px;height:28.75px;background:#f1f3f4"></div><div class="r" style="left:37.00px;top:741.55px;width:1103.00px;height:1.00px;background:#eef0f2"></div><div class="t" style="left:50.50px;top:722.13px;font-size:10.8px;line-height:10.8px;color:#3c4043;font-weight:400;-webkit-text-stroke:0.12px #3c4043;">5</div><div class="t" style="left:79.50px;top:721.53px;font-size:11.4px;line-height:11.4px;color:#202124;font-weight:400;-webkit-text-stroke:0.3px #202124;letter-spacing:0.05px;">email</div><div class="t" style="left:-123.30px;width:400px;text-align:right;top:722.73px;font-size:10.8px;line-height:10.8px;color:#3c4043;font-weight:400;-webkit-text-stroke:0.12px #3c4043;letter-spacing:-0.3px;">299</div><div class="t" style="left:-14.40px;width:400px;text-align:right;top:722.73px;font-size:10.8px;line-height:10.8px;color:#3c4043;font-weight:400;-webkit-text-stroke:0.12px #3c4043;letter-spacing:-0.3px;">93</div><div class="t" style="left:95.00px;width:400px;text-align:right;top:722.73px;font-size:10.8px;line-height:10.8px;color:#3c4043;font-weight:400;-webkit-text-stroke:0.12px #3c4043;letter-spacing:-0.3px;">356</div><div class="t" style="left:204.30px;width:400px;text-align:right;top:722.73px;font-size:10.8px;line-height:10.8px;color:#3c4043;font-weight:400;-webkit-text-stroke:0.12px #3c4043;letter-spacing:-0.3px;">74.95%</div><div class="t" style="left:313.80px;width:400px;text-align:right;top:722.73px;font-size:10.8px;line-height:10.8px;color:#3c4043;font-weight:400;-webkit-text-stroke:0.12px #3c4043;letter-spacing:-0.3px;">1.07</div><div class="t" style="left:422.70px;width:400px;text-align:right;top:722.73px;font-size:10.8px;line-height:10.8px;color:#3c4043;font-weight:400;-webkit-text-stroke:0.12px #3c4043;letter-spacing:-0.3px;">2m 57s</div><div class="t" style="left:522.80px;width:400px;text-align:right;top:722.73px;font-size:10.8px;line-height:10.8px;color:#3c4043;font-weight:400;-webkit-text-stroke:0.12px #3c4043;letter-spacing:-0.3px;">11,538</div><div class="t" style="left:622.90px;width:400px;text-align:right;top:722.73px;font-size:10.8px;line-height:10.8px;color:#3c4043;font-weight:400;-webkit-text-stroke:0.12px #3c4043;letter-spacing:-0.3px;">346.00</div><div class="t" style="left:726.00px;width:400px;text-align:right;top:722.73px;font-size:10.8px;line-height:10.8px;color:#3c4043;font-weight:400;-webkit-text-stroke:0.12px #3c4043;letter-spacing:-0.3px;">$790.42</div><div class="r" style="left:37.00px;top:770.30px;width:1103.00px;height:1.00px;background:#eef0f2"></div><div class="t" style="left:50.50px;top:750.88px;font-size:10.8px;line-height:10.8px;color:#3c4043;font-weight:400;-webkit-text-stroke:0.12px #3c4043;">6</div><div class="t" style="left:79.50px;top:750.28px;font-size:11.4px;line-height:11.4px;color:#202124;font-weight:400;-webkit-text-stroke:0.3px #202124;letter-spacing:0.05px;">affiliate</div><div class="t" style="left:-123.30px;width:400px;text-align:right;top:751.48px;font-size:10.8px;line-height:10.8px;color:#3c4043;font-weight:400;-webkit-text-stroke:0.12px #3c4043;letter-spacing:-0.3px;">297</div><div class="t" style="left:-14.40px;width:400px;text-align:right;top:751.48px;font-size:10.8px;line-height:10.8px;color:#3c4043;font-weight:400;-webkit-text-stroke:0.12px #3c4043;letter-spacing:-0.3px;">88</div><div class="t" style="left:95.00px;width:400px;text-align:right;top:751.48px;font-size:10.8px;line-height:10.8px;color:#3c4043;font-weight:400;-webkit-text-stroke:0.12px #3c4043;letter-spacing:-0.3px;">347</div><div class="t" style="left:204.30px;width:400px;text-align:right;top:751.48px;font-size:10.8px;line-height:10.8px;color:#3c4043;font-weight:400;-webkit-text-stroke:0.12px #3c4043;letter-spacing:-0.3px;">64.98%</div><div class="t" style="left:313.80px;width:400px;text-align:right;top:751.48px;font-size:10.8px;line-height:10.8px;color:#3c4043;font-weight:400;-webkit-text-stroke:0.12px #3c4043;letter-spacing:-0.3px;">1.09</div><div class="t" style="left:422.70px;width:400px;text-align:right;top:751.48px;font-size:10.8px;line-height:10.8px;color:#3c4043;font-weight:400;-webkit-text-stroke:0.12px #3c4043;letter-spacing:-0.3px;">0m 49s</div><div class="t" style="left:522.80px;width:400px;text-align:right;top:751.48px;font-size:10.8px;line-height:10.8px;color:#3c4043;font-weight:400;-webkit-text-stroke:0.12px #3c4043;letter-spacing:-0.3px;">9,074</div><div class="t" style="left:622.90px;width:400px;text-align:right;top:751.48px;font-size:10.8px;line-height:10.8px;color:#3c4043;font-weight:400;-webkit-text-stroke:0.12px #3c4043;letter-spacing:-0.3px;">303.00</div><div class="t" style="left:726.00px;width:400px;text-align:right;top:751.48px;font-size:10.8px;line-height:10.8px;color:#3c4043;font-weight:400;-webkit-text-stroke:0.12px #3c4043;letter-spacing:-0.3px;">$1,328.00</div><div class="r" style="left:37.00px;top:770.80px;width:1103.00px;height:28.75px;background:#f8f9fa"></div><div class="r" style="left:290.50px;top:770.80px;width:1.00px;height:28.75px;background:#f1f3f4"></div><div class="r" style="left:399.00px;top:770.80px;width:1.00px;height:28.75px;background:#f1f3f4"></div><div class="r" style="left:727.00px;top:770.80px;width:1.00px;height:28.75px;background:#f1f3f4"></div><div class="r" style="left:936.40px;top:770.80px;width:1.00px;height:28.75px;background:#f1f3f4"></div><div class="r" style="left:1036.50px;top:770.80px;width:1.00px;height:28.75px;background:#f1f3f4"></div><div class="r" style="left:37.00px;top:799.05px;width:1103.00px;height:1.00px;background:#eef0f2"></div><div class="t" style="left:50.50px;top:779.63px;font-size:10.8px;line-height:10.8px;color:#3c4043;font-weight:400;-webkit-text-stroke:0.12px #3c4043;">7</div><div class="t" style="left:79.50px;top:779.03px;font-size:11.4px;line-height:11.4px;color:#202124;font-weight:400;-webkit-text-stroke:0.3px #202124;letter-spacing:0.05px;">(not set)</div><div class="t" style="left:-123.30px;width:400px;text-align:right;top:780.23px;font-size:10.8px;line-height:10.8px;color:#3c4043;font-weight:400;-webkit-text-stroke:0.12px #3c4043;letter-spacing:-0.3px;">68</div><div class="t" style="left:-14.40px;width:400px;text-align:right;top:780.23px;font-size:10.8px;line-height:10.8px;color:#3c4043;font-weight:400;-webkit-text-stroke:0.12px #3c4043;letter-spacing:-0.3px;">15</div><div class="t" style="left:95.00px;width:400px;text-align:right;top:780.23px;font-size:10.8px;line-height:10.8px;color:#3c4043;font-weight:400;-webkit-text-stroke:0.12px #3c4043;letter-spacing:-0.3px;">43</div><div class="t" style="left:204.30px;width:400px;text-align:right;top:780.23px;font-size:10.8px;line-height:10.8px;color:#3c4043;font-weight:400;-webkit-text-stroke:0.12px #3c4043;letter-spacing:-0.3px;">38.74%</div><div class="t" style="left:313.80px;width:400px;text-align:right;top:780.23px;font-size:10.8px;line-height:10.8px;color:#3c4043;font-weight:400;-webkit-text-stroke:0.12px #3c4043;letter-spacing:-0.3px;">0.56</div><div class="t" style="left:422.70px;width:400px;text-align:right;top:780.23px;font-size:10.8px;line-height:10.8px;color:#3c4043;font-weight:400;-webkit-text-stroke:0.12px #3c4043;letter-spacing:-0.3px;">0m 36s</div><div class="t" style="left:522.80px;width:400px;text-align:right;top:780.23px;font-size:10.8px;line-height:10.8px;color:#3c4043;font-weight:400;-webkit-text-stroke:0.12px #3c4043;letter-spacing:-0.3px;">37,775</div><div class="t" style="left:622.90px;width:400px;text-align:right;top:780.23px;font-size:10.8px;line-height:10.8px;color:#3c4043;font-weight:400;-webkit-text-stroke:0.12px #3c4043;letter-spacing:-0.3px;">68.00</div><div class="t" style="left:726.00px;width:400px;text-align:right;top:780.23px;font-size:10.8px;line-height:10.8px;color:#3c4043;font-weight:400;-webkit-text-stroke:0.12px #3c4043;letter-spacing:-0.3px;">$0.00</div><div class="r" style="left:37.00px;top:827.80px;width:1103.00px;height:1.00px;background:#eef0f2"></div><div class="t" style="left:50.50px;top:808.38px;font-size:10.8px;line-height:10.8px;color:#3c4043;font-weight:400;-webkit-text-stroke:0.12px #3c4043;">8</div><div class="t" style="left:79.50px;top:807.78px;font-size:11.4px;line-height:11.4px;color:#202124;font-weight:400;-webkit-text-stroke:0.3px #202124;letter-spacing:0.05px;">(data deleted)</div><div class="t" style="left:-123.30px;width:400px;text-align:right;top:808.98px;font-size:10.8px;line-height:10.8px;color:#3c4043;font-weight:400;-webkit-text-stroke:0.12px #3c4043;letter-spacing:-0.3px;">0</div><div class="t" style="left:-14.40px;width:400px;text-align:right;top:808.98px;font-size:10.8px;line-height:10.8px;color:#3c4043;font-weight:400;-webkit-text-stroke:0.12px #3c4043;letter-spacing:-0.3px;">43</div><div class="t" style="left:95.00px;width:400px;text-align:right;top:808.98px;font-size:10.8px;line-height:10.8px;color:#3c4043;font-weight:400;-webkit-text-stroke:0.12px #3c4043;letter-spacing:-0.3px;">113</div><div class="t" style="left:204.30px;width:400px;text-align:right;top:808.98px;font-size:10.8px;line-height:10.8px;color:#3c4043;font-weight:400;-webkit-text-stroke:0.12px #3c4043;letter-spacing:-0.3px;">77.4%</div><div class="t" style="left:313.80px;width:400px;text-align:right;top:808.98px;font-size:10.8px;line-height:10.8px;color:#3c4043;font-weight:400;-webkit-text-stroke:0.12px #3c4043;letter-spacing:-0.3px;">1.98</div><div class="t" style="left:422.70px;width:400px;text-align:right;top:808.98px;font-size:10.8px;line-height:10.8px;color:#3c4043;font-weight:400;-webkit-text-stroke:0.12px #3c4043;letter-spacing:-0.3px;">4m 45s</div><div class="t" style="left:522.80px;width:400px;text-align:right;top:808.98px;font-size:10.8px;line-height:10.8px;color:#3c4043;font-weight:400;-webkit-text-stroke:0.12px #3c4043;letter-spacing:-0.3px;">4,133</div><div class="t" style="left:622.90px;width:400px;text-align:right;top:808.98px;font-size:10.8px;line-height:10.8px;color:#3c4043;font-weight:400;-webkit-text-stroke:0.12px #3c4043;letter-spacing:-0.3px;">14.00</div><div class="t" style="left:726.00px;width:400px;text-align:right;top:808.98px;font-size:10.8px;line-height:10.8px;color:#3c4043;font-weight:400;-webkit-text-stroke:0.12px #3c4043;letter-spacing:-0.3px;">$357.48</div><div class="r" style="left:191.00px;top:454.00px;width:1.00px;height:374.00px;background:#eceef0"></div>
</body></html>
